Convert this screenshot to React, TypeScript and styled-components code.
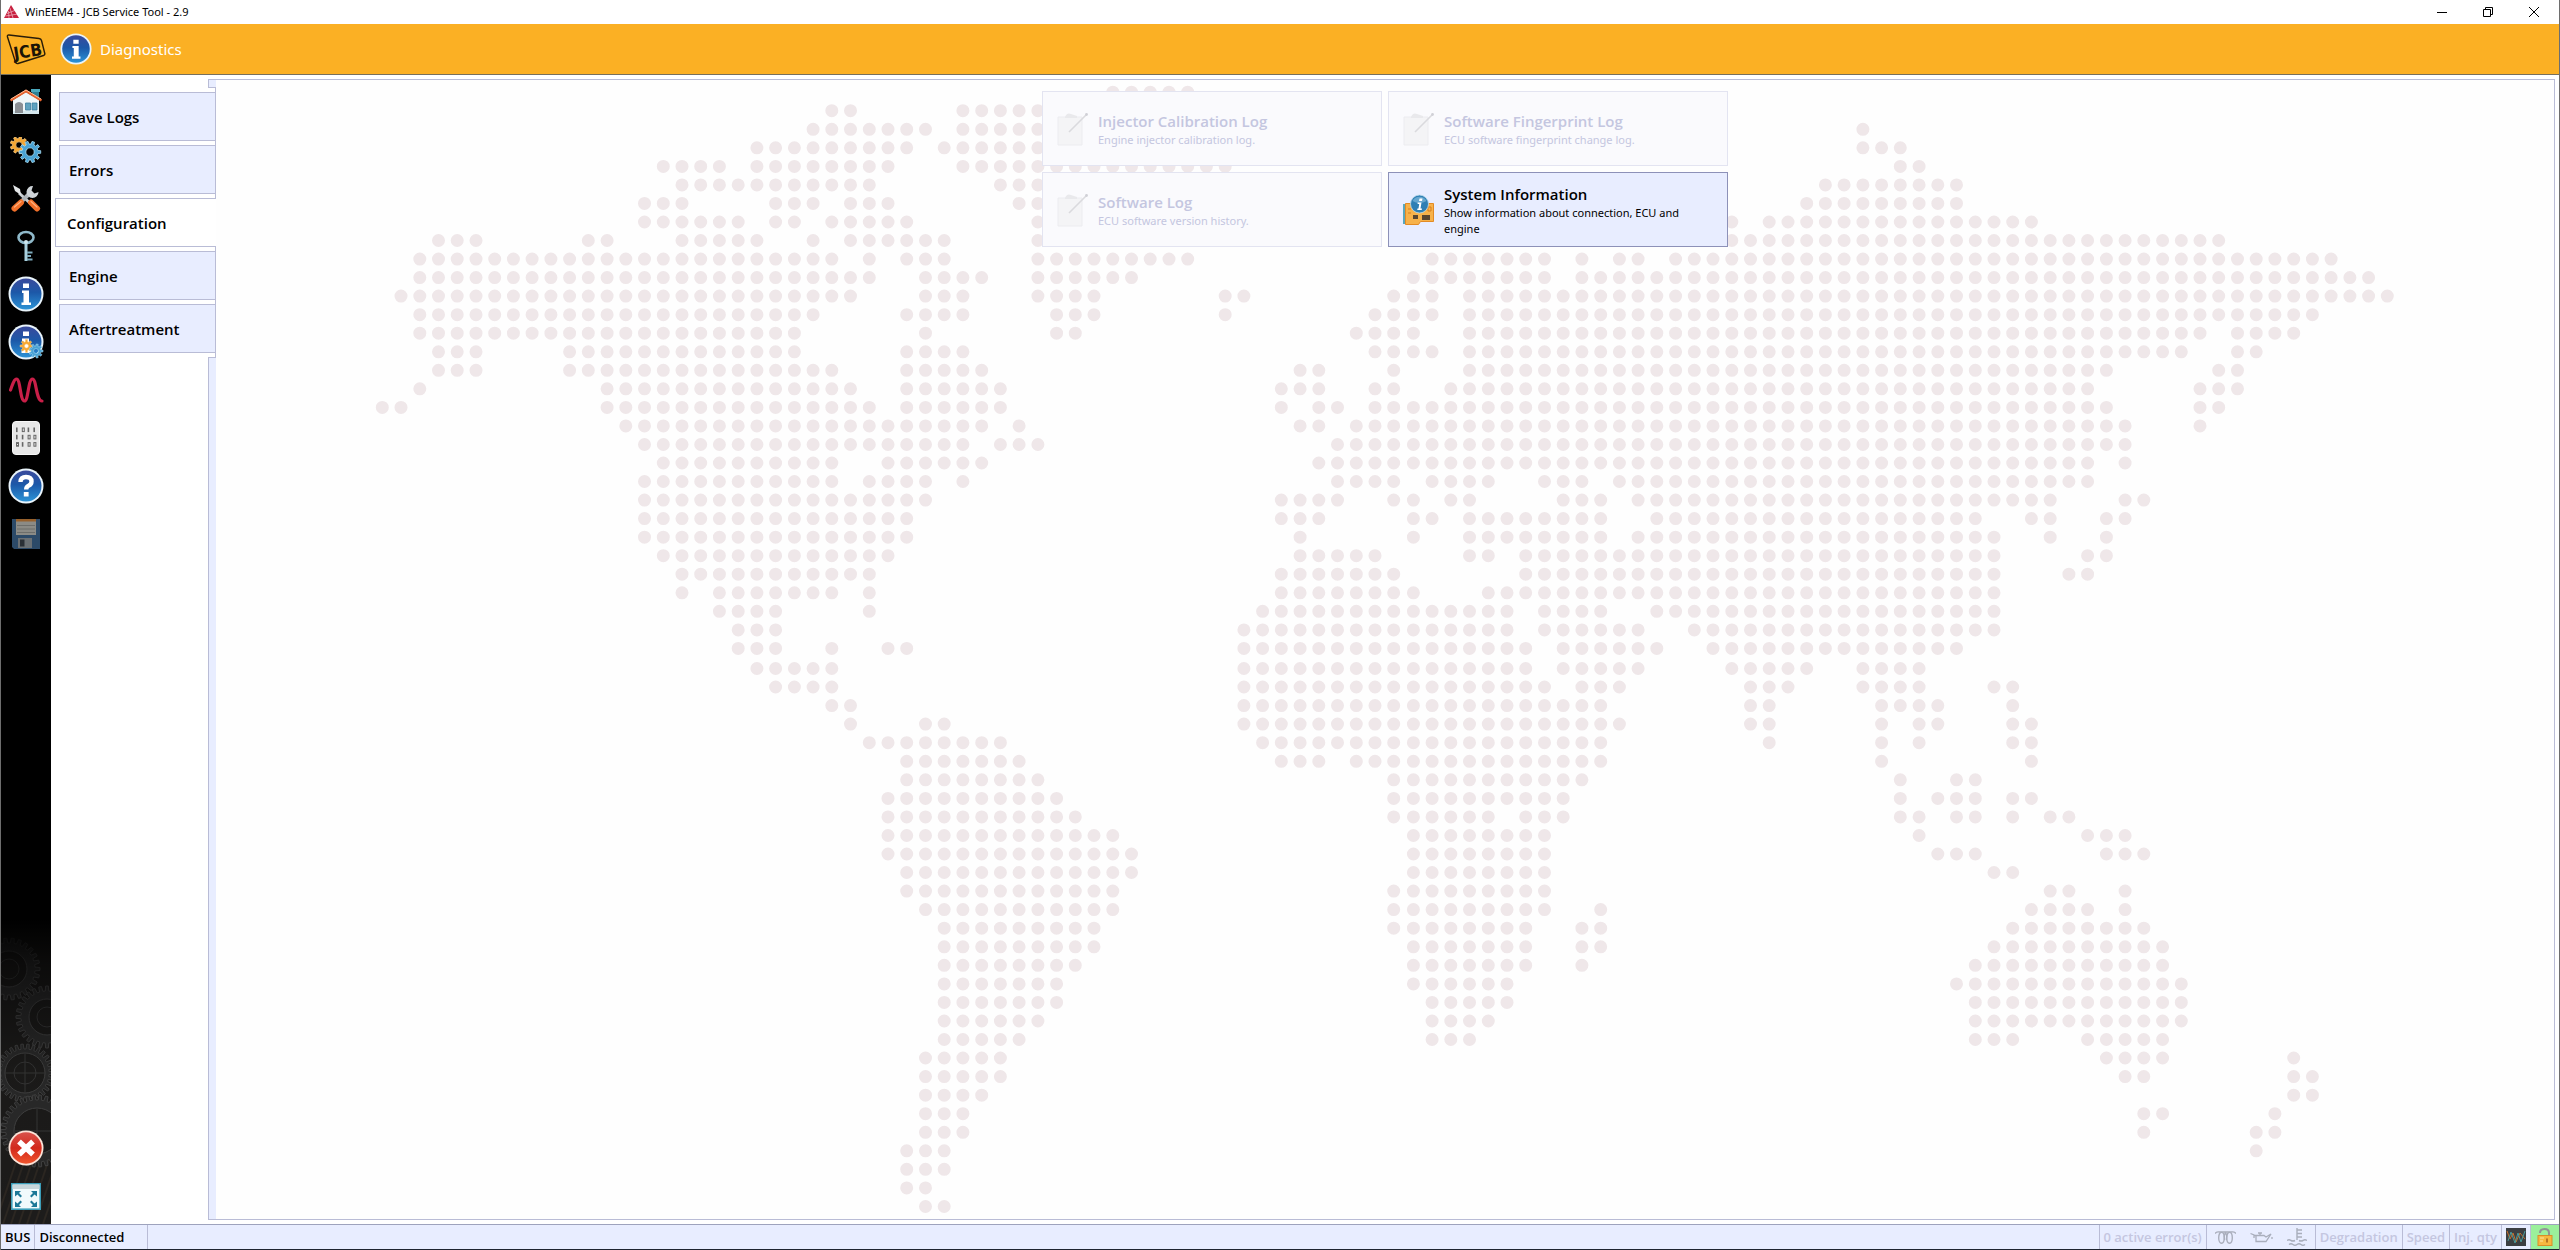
import React from "react";
import styled, { createGlobalStyle, css } from "styled-components";

const color = {
  orange: "#fbb024",
  lavender: "#e8edff",
  line: "#b9bcd6",
  edge: "#6e6e6e",
  muted: "#c4c6e0",
  dot: "#efe7e9",
};

const regularFont = `"Noto Sans", "Open Sans", sans-serif`;

const GlobalStyle = createGlobalStyle`
  *, *::before, *::after { box-sizing: border-box; }
  html, body { margin: 0; padding: 0; }
  body {
    font-family: "Open Sans", "Noto Sans", sans-serif;
    font-size: 14px;
    color: #000;
    background: #fff;
  }
  button { font: inherit; color: inherit; margin: 0; padding: 0; border: 0; background: none; }
`;

const Window = styled.div`
  display: flex;
  flex-direction: column;
  height: 100vh;
  overflow: hidden;
  border-left: 1px solid ${color.edge};
  border-right: 1px solid ${color.edge};
`;

const TitleBar = styled.header`
  display: flex;
  align-items: center;
  height: 24px;
  padding-left: 3px;
  padding-right: 2px;
  gap: 6px;
  flex: none;
`;

const WindowTitle = styled.span`
  flex: 1;
  font-family: ${regularFont};
  font-size: 11px;
  line-height: 16px;
`;

const WindowControls = styled.div`
  display: flex;
`;

const WindowButton = styled.button`
  display: flex;
  align-items: center;
  justify-content: center;
  width: 46px;
  height: 24px;
`;

const Banner = styled.div`
  display: flex;
  align-items: center;
  height: 51px;
  flex: none;
  padding-left: 5px;
  background: ${color.orange};
  border-bottom: 1px solid #77705c;
  color: #fff;
`;

const BannerIcon = styled.span`
  display: flex;
  margin-left: 14px;
  margin-right: 8px;
`;

const PageTitle = styled.h1`
  margin: 0;
  font-family: ${regularFont};
  font-size: 15px;
  line-height: 20px;
  font-weight: 400;
`;

const Body = styled.div`
  display: flex;
  flex: 1;
  min-height: 0;
`;

const Sidebar = styled.nav`
  display: grid;
  width: 50px;
  flex: none;
  background: #000;
`;

const SidebarArt = styled.div`
  grid-area: 1 / 1;
  align-self: end;
  height: 305px;
  overflow: hidden;
`;

const SidebarItems = styled.div`
  grid-area: 1 / 1;
  display: flex;
  flex-direction: column;
  padding: 3px 0 4px;
`;

const Spacer = styled.div`
  flex: 1;
`;

const SideButton = styled.button`
  display: flex;
  align-items: center;
  justify-content: center;
  height: 48px;
`;

const Workspace = styled.main`
  display: flex;
  flex: 1;
  min-width: 0;
  padding: 4px;
`;

const TabRail = styled.div`
  display: flex;
  flex-direction: column;
  width: 161px;
  flex: none;
`;

const RailCap = styled.div<{ $fill?: boolean }>`
  align-self: flex-end;
  width: 8px;
  background: ${color.lavender};
  border: 1px solid ${color.line};
  border-right: 0;
  ${(p) => (p.$fill ? css`flex: 1;` : css`height: 9px;`)}
`;

const TabList = styled.div`
  display: flex;
  flex-direction: column;
  gap: 4px;
  padding: 4px 0;
  border-right: 1px solid ${color.line};
`;

const Tab = styled.button<{ $active?: boolean }>`
  height: 49px;
  margin-left: 4px;
  padding-left: 9px;
  text-align: left;
  font-size: 15px;
  line-height: 20px;
  font-weight: 600;
  background: ${color.lavender};
  border: 1px solid ${color.line};
  border-right: 0;
  ${(p) =>
    p.$active &&
    css`
      margin-left: 0;
      margin-right: -1px;
      padding-left: 11px;
      background: #fff;
    `}
`;

const Panel = styled.section`
  display: grid;
  flex: 1;
  min-width: 0;
  grid-template: minmax(0, 1fr) / minmax(0, 1fr);
  background: #fefefe;
  border: 1px solid ${color.line};
  border-left: 0;
`;

const MapLayer = styled.div`
  grid-area: 1 / 1;
  min-height: 0;
  svg { display: block; width: 100%; height: 100%; }
`;

const CardGrid = styled.div`
  grid-area: 1 / 1;
  display: grid;
  grid-template-columns: repeat(2, 340px);
  grid-auto-rows: 75px;
  gap: 6px;
  justify-content: center;
  align-content: start;
  padding-top: 11px;
`;

const Card = styled.button`
  display: flex;
  align-items: center;
  gap: 9px;
  padding-left: 14px;
  padding-right: 12px;
  text-align: left;
  color: #000;
  background: ${color.lavender};
  border: 1px solid #8d91b8;
  svg { flex: none; }
  &:disabled {
    color: ${color.muted};
    background: #fafafd;
    border-color: #e3e4f1;
  }
`;

const CardText = styled.span`
  display: flex;
  flex-direction: column;
`;

const CardTitle = styled.span`
  font-size: 15px;
  line-height: 22px;
  font-weight: 600;
`;

const CardNote = styled.span`
  font-family: ${regularFont};
  font-size: 11px;
  line-height: 16px;
`;

const StatusBar = styled.footer`
  display: flex;
  align-items: stretch;
  height: 26px;
  flex: none;
  background: ${color.lavender};
  border-top: 1px solid #9ea3bd;
  border-bottom: 1px solid #1d2430;
`;

const StatusCell = styled.span<{ $muted?: boolean; $grow?: boolean }>`
  display: flex;
  align-items: center;
  padding: 0 4px;
  font-size: 13px;
  line-height: 20px;
  font-weight: 600;
  border-right: 1px solid ${color.line};
  ${(p) => p.$muted && css`color: ${color.muted};`}
  ${(p) => p.$grow && css`flex: 1;`}
`;

const StatusWide = styled(StatusCell)`
  width: 113px;
`;

const StatusLamps = styled(StatusCell)`
  gap: 14px;
  padding: 0 8px;
`;

const LockCell = styled.span`
  display: flex;
  align-items: center;
  justify-content: center;
  width: 28px;
  background: #9bf09b;
`;

/* Dotted world map: one string per grid row, listing the filled column ranges. */
const MAP_ROWS = [
  "39-43",
  "24-25 31-43",
  "23-29 31-45 79",
  "20-28 30-45 79-81",
  "15-18 20-27 31-45 81-82",
  "16-26 33-45 77-84",
  "14-16 21-23 25-27 34-45 76-84",
  "14-19 21-22 24-28 35-45 72 74-88",
  "3-5 11-12 16-20 23 25-30 35-44 72-98",
  "2-24 26 28-30 35-43 56-62 64 66-67 69-104",
  "2-26 29-32 35-40 55-62 64-106",
  "1-25 29-31 35-38 45-46 54-56 58-107",
  "2-23 28-31 36-38 45 53-56 58-103",
  "2-22 29 36-37 52-55 58-97 99-102",
  "3-5 10-22 28-31 53-56 58-96 99-100",
  "3-5 10-24 28-32 49-50 54 58-92 98-99",
  "2 12-25 28-33 48-50 53-54 57-91 97-99",
  "0-1 12-26 28-33 48 50-51 53-92 97-98",
  "13-32 34 49-50 52-93 97",
  "14-31 33-35 51-93",
  "15-24 27-32 50-91 93",
  "14-24 26-29 31 51-54 56-59 62-64 66-91",
  "14-29 48-51 54-55 57-58 63-65 67-89 93-94",
  "14-28 48-50 55-56 58-65 68-85 88-89 92-93",
  "14-28 49 55 58-65 67-86 89 92",
  "15-27 49-53 58-59 61-86 91-92",
  "16-26 48-54 61-86 90-91",
  "16 18-24 26 48-55 59-86",
  "18-21 26 47-60 62-65 68-86",
  "19-21 46-60 62-67 70-86",
  "19-21 24 27-28 46-61 63-68 71-84",
  "20-24 46-61 63-67 72-76 79-82",
  "21-24 46-62 64-66 73-75 79-82 86-87",
  "24-25 46-65 73-74 80-83 87",
  "25 29-30 46-66 73-74 80 82-83 87-88",
  "26-33 47-65 74 80 82 87-88",
  "28-34 48-50 52-65 80 88",
  "28-35 54-64 81 84-85",
  "27-36 54-63 81 83-85 87-88",
  "27-37 54-59 61-63 81-82 84-85 87 89-90",
  "27-39 55-62 82 91-93",
  "27-40 55-62 83-85 92-94",
  "28-40 55-62 86-87",
  "28-39 54-62 89-90 93",
  "29-39 54-62 65 88-91 93",
  "30-38 54-61 64-65 87-94",
  "30-38 55-61 64-65 86-95",
  "30-37 55-61 64 85-95",
  "30-36 55-60 84-96",
  "30-36 56-60 85-96",
  "30-35 56-59 85-96",
  "30-34 56-58 85-87 91-95",
  "29-33 92-95 102",
  "29-33 93-94 102-103",
  "29-32 102-103",
  "29-31 94-95 101",
  "29-31 94 100-101",
  "28-30 100",
  "28-30",
  "28-29",
  "29-30",
];

function mapPath(): string {
  const r = 6.5;
  let d = "";
  MAP_ROWS.forEach((row, j) => {
    const y = (j <= 30 ? 12.2 + 18.54 * j : 588.5 + 18.55 * (j - 31)).toFixed(1);
    row.split(" ").forEach((range) => {
      const [a, b = a] = range.split("-").map(Number);
      for (let i = a; i <= b; i++) {
        const x = 166.3 + 18.73 * i + (i > 54 ? 0.9 : 0) - r;
        d += `M${x.toFixed(1)} ${y}a${r} ${r} 0 1 0 13 0a${r} ${r} 0 1 0 -13 0`;
      }
    });
  });
  return d;
}

const WORLD = mapPath();

function gearPath(cx: number, cy: number, inner: number, outer: number, teeth: number, hole = 0): string {
  const pts: string[] = [];
  const step = (Math.PI * 2) / teeth;
  for (let i = 0; i < teeth; i++) {
    const a = i * step;
    [[-0.3, inner], [-0.2, outer], [0.2, outer], [0.3, inner]].forEach(([f, rad]) => {
      pts.push(`${(cx + Math.cos(a + f * step) * rad).toFixed(2)} ${(cy + Math.sin(a + f * step) * rad).toFixed(2)}`);
    });
  }
  let d = `M${pts.join("L")}Z`;
  if (hole) d += `M${cx - hole} ${cy}a${hole} ${hole} 0 1 0 ${hole * 2} 0a${hole} ${hole} 0 1 0 ${-hole * 2} 0Z`;
  return d;
}

const AppMark = () => (
  <svg width="15" height="14" viewBox="0 0 15 14" aria-hidden="true">
    <path d="M7 0L15 13H0Z" fill="#c8203f" />
    <path d="M3 8.5L12 5M1.500 11L14 9M6 3L9 13M4.500 6L5 13" stroke="#fff" strokeWidth="0.7" opacity="0.7" />
  </svg>
);

const JcbLogo = () => (
  <svg width="40" height="31" viewBox="0 0 40 31" role="img" aria-label="JCB">
    <path d="M3 1L33 4.500Q35 4.700 35.500 6.500L38.800 19.500Q39.200 21 37.500 21.500L12 29.500Q10 30 9.500 28L1.500 3Q1 0.800 3 1Z" fill="none" stroke="#2a1d08" strokeWidth="1.400" strokeLinejoin="round" />
    <text x="8.500" y="25.500" transform="rotate(-9 8.5 25.5)" fontFamily="DejaVu Sans Condensed, DejaVu Sans, sans-serif" fontSize="17" fontWeight="700" fill="#1d1507">JCB</text>
  </svg>
);

const BlueDisc = ({ size, id, children }: { size: number; id: string; children?: React.ReactNode }) => (
  <svg width={size} height={size} viewBox="0 0 36 36" aria-hidden="true">
    <defs>
      <linearGradient id={id} x1="0" y1="0" x2="0" y2="1">
        <stop offset="0" stopColor="#3a4a9c" />
        <stop offset="0.450" stopColor="#1c58a8" />
        <stop offset="1" stopColor="#2c93d6" />
      </linearGradient>
    </defs>
    <circle cx="18" cy="18" r="17.500" fill="#e9f4fb" />
    <circle cx="18" cy="18" r="15.500" fill={`url(#${id})`} />
    {children}
  </svg>
);

const InfoGlyph = () => (
  <path d="M15 7.500h6v4.500h-6zM14 14.500h7v12h2v2.500h-9.500v-2.500h2v-9.500h-1.500z" fill="#fff" />
);

const HomeIcon = () => (
  <svg width="34" height="28" viewBox="0 0 34 28" aria-hidden="true">
    <path d="M23 2h7v9h-7z" fill="#2d7f93" />
    <path d="M22 1h9v3h-9z" fill="#4aa9bd" />
    <path d="M4 12L17 4L30 12V26H4Z" fill="#eef6f8" />
    <path d="M4 23h26v3h-26z" fill="#d5e8ee" />
    <path d="M1.500 12.500L17 3L32.500 12.500" fill="none" stroke="#e8622c" strokeWidth="2.600" />
    <path d="M2 11L17 2L32 11" fill="none" stroke="#ffc9a4" strokeWidth="0.900" />
    <path d="M6 25V16q4-4 8 0V25z" fill="#8a8f94" />
    <path d="M16.500 15h5v7h-5zM23 15h5v7h-5z" fill="#5fa3c0" stroke="#3b7f9e" strokeWidth="0.800" />
  </svg>
);

const GearsIcon = () => (
  <svg width="32" height="26" viewBox="0 0 32 26" aria-hidden="true">
    <path d={gearPath(9, 8, 6.5, 8.800, 9, 3.2)} fill="#f5a733" stroke="#fbd08a" strokeWidth="0.700" fillRule="evenodd" />
    <path d={gearPath(20, 15, 8, 10.800, 10, 4.2)} fill="#4aa3d4" stroke="#a5daf2" strokeWidth="0.800" fillRule="evenodd" />
  </svg>
);

const ToolsIcon = () => (
  <svg width="30" height="28" viewBox="0 0 30 28" aria-hidden="true">
    <path d="M8 9L20 20" stroke="#c9ced2" strokeWidth="3" />
    <path d="M2 1L9 5L10 11L4 7Z" fill="#e3e6e8" />
    <path d="M10 18L19 9" stroke="#aeb4b9" strokeWidth="4" />
    <path d="M22 2a6 6 0 1 0 5.500 6l-4 1.500l-3-3z" fill="#cfd4d8" />
    <path d="M3.500 24.500L10 18.500" stroke="#f2702a" strokeWidth="6" strokeLinecap="round" />
    <path d="M20 18.500L26 24.500" stroke="#f2702a" strokeWidth="6" strokeLinecap="round" />
    <path d="M3.500 23L10 17.500M20 17.500L26 23" stroke="#ffb07c" strokeWidth="1.200" strokeLinecap="round" />
  </svg>
);

const KeyIcon = () => (
  <svg width="20" height="32" viewBox="0 0 20 32" aria-hidden="true">
    <ellipse cx="10" cy="7.500" rx="7.500" ry="5.500" fill="none" stroke="#8fb9ca" strokeWidth="2.600" />
    <path d="M10 13V31" stroke="#a9d0de" strokeWidth="3" />
    <path d="M11 22.500h5.500M11 26h4M11 29.500h5.500" stroke="#7eabbd" strokeWidth="2" />
    <circle cx="10" cy="12" r="2" fill="#cfe8f0" />
  </svg>
);

const WaveIcon = () => (
  <svg width="36" height="28" viewBox="0 0 36 28" aria-hidden="true">
    <path d="M2.500 14C5 7 6.500 3 8.500 3C12.500 3 12 25 16.500 25C20.500 25 20 3 24.500 3C28.500 3 28 25 34 25" fill="none" stroke="#c91f48" strokeWidth="3.200" strokeLinecap="round" />
  </svg>
);

const BITS = ["1011", "1100", "0100"];
const BinaryIcon = () => (
  <svg width="28" height="34" viewBox="0 0 28 34" aria-hidden="true">
    <rect x="0.500" y="0.500" width="27" height="33" rx="3.500" fill="#e8e8e8" stroke="#f7f7f7" />
    {BITS.map((row, j) =>
      row.split("").map((bit, i) => (
        <rect key={`${j}${i}`} x={4.5 + i * 5.8} y={7 + j * 7.3} width={bit === "1" ? 0.6 : 2} height="3.600" fill="none" stroke="#666" strokeWidth="1" />
      ))
    )}
  </svg>
);

const DiskIcon = () => (
  <svg width="28" height="30" viewBox="0 0 28 30" aria-hidden="true">
    <path d="M0 0h28v30h-26l-2-2z" fill="#2c4a68" />
    <path d="M4 1h20v15h-20z" fill="#8b8b86" />
    <path d="M4 0h20v2.500h-20z" fill="#96602c" />
    <path d="M5 6.500h18M5 10h18M5 13.500h18" stroke="#6d6e6b" />
    <path d="M6 19h14v10h-14z" fill="#6a7074" />
    <path d="M8 20.500h4.500v7h-4.500z" fill="#2a3036" />
  </svg>
);

const CloseIcon = () => (
  <svg width="36" height="36" viewBox="0 0 36 36" aria-hidden="true">
    <defs>
      <linearGradient id="close-disc" x1="0" y1="0" x2="0" y2="1">
        <stop offset="0" stopColor="#d8514a" />
        <stop offset="0.500" stopColor="#d2291c" />
        <stop offset="1" stopColor="#f0542c" />
      </linearGradient>
    </defs>
    <circle cx="18" cy="18" r="17.500" fill="#fbe3d8" />
    <circle cx="18" cy="18" r="15.700" fill="url(#close-disc)" />
    <path d="M11 11.500L25 24.500M25 11.500L11 24.500" stroke="#fff" strokeWidth="5.500" />
  </svg>
);

const FullScreenIcon = () => (
  <svg width="30" height="27" viewBox="0 0 30 27" aria-hidden="true">
    <rect x="0.800" y="0.800" width="28.400" height="25.400" fill="#f1fafc" stroke="#3b9db8" strokeWidth="1.600" />
    <path d="M1.500 1.500h27v4.500h-27z" fill="#c7d6da" />
    <path d="M4 8h6l-2 2l3 3l-1.500 1.500l-3-3l-2.500 2zM26 8h-6l2 2l-3 3l1.500 1.500l3-3l2.500 2zM4 24h6l-2-2l3-3l-1.500-1.500l-3 3l-2.500-2zM26 24h-6l2-2l-3-3l1.500-1.500l3 3l2.500-2z" fill="#1c7897" />
  </svg>
);

const GearArt = () => (
  <svg width="50" height="305" viewBox="0 0 50 305" aria-hidden="true">
    <defs>
      <linearGradient id="art-fade" x1="0" y1="0" x2="0" y2="1">
        <stop offset="0" stopColor="#000" />
        <stop offset="0.150" stopColor="#000" stopOpacity="0.600" />
        <stop offset="0.500" stopColor="#000" stopOpacity="0.100" />
        <stop offset="1" stopColor="#000" stopOpacity="0" />
      </linearGradient>
    </defs>
    <rect width="50" height="305" fill="#1d1c1b" />
    <g stroke="#2c2722" strokeWidth="2">
      {[0, 1, 2, 3, 4, 5, 6, 7].map((i) => (
        <path key={i} d={`M${i * 8 - 6} 305L${i * 8 + 16} 240`} />
      ))}
    </g>
    <g fill="#2b2b2b" stroke="#434343" strokeWidth="1" fillRule="evenodd">
      <path d={gearPath(8, 50, 26, 31, 26, 18)} />
      <path d={gearPath(46, 98, 26, 31, 28, 18)} />
      <path d={gearPath(24, 154, 24, 29, 30, 20)} />
      <path d={gearPath(36, 212, 31, 36, 34, 23)} />
    </g>
    <g fill="none" stroke="#383838">
      <circle cx="8" cy="50" r="10" />
      <circle cx="46" cy="98" r="10" />
      <circle cx="24" cy="154" r="11" />
      <path d="M24 134v40M4 154h40M36 190v44M14 212h36" />
    </g>
    <rect width="50" height="305" fill="url(#art-fade)" />
  </svg>
);

const NoteIcon = () => (
  <svg width="32" height="35" viewBox="0 0 32 35" aria-hidden="true">
    <path d="M1 6h24v28h-24z" fill="#f4f4f6" stroke="#ececf0" />
    <path d="M8 6q2-5 6-3l6 2v2h-12z" fill="#e9e9ec" />
    <path d="M12 21L29 4" stroke="#dadade" strokeWidth="1.600" />
    <circle cx="29.500" cy="3.500" r="1.400" fill="#d0d0d6" />
  </svg>
);

const SystemIcon = () => (
  <svg width="32" height="32" viewBox="0 0 32 32" aria-hidden="true">
    <path d="M0 10h3v20h-3z" fill="#5aa7bd" />
    <path d="M2.500 9.500h28v18h-13l-2 3h-13z" fill="#f7b24a" stroke="#e38b24" />
    <path d="M10 21h5v4h-5zM19 21h8v5h-8z" fill="#5a4630" />
    <path d="M5 15h3M5 19h3M25 13h3v4h-3z" stroke="#d77f1e" fill="none" />
    <circle cx="16.500" cy="10" r="9" fill="#2e7fb4" stroke="#bcdcec" strokeWidth="0.800" />
    <path d="M9.500 7a8 8 0 0 1 14 0q-7 4-14 0z" fill="#7fb8da" opacity="0.700" />
    <path d="M16.500 4.500h3l-0.500 2.500h-3zM14.500 8.500h4l-1 6h1.500l-0.300 1.500h-4.500l0.300-1.500h1l0.700-4.500h-1.500z" fill="#fff" />
  </svg>
);

const CoilIcon = () => (
  <svg width="21" height="13" viewBox="0 0 21 13" fill="none" stroke="#a9aebc" strokeWidth="1.400" aria-hidden="true">
    <path d="M0 2.500q2-2 4.500-1.500h12q2.500-0.500 4.500 1.500" />
    <ellipse cx="6.500" cy="6.800" rx="2.800" ry="5.400" />
    <ellipse cx="14.500" cy="6.800" rx="2.800" ry="5.400" />
    <path d="M10.500 1q-2 4-1 8M10.500 1q2 4 1 8" />
  </svg>
);

const OilIcon = () => (
  <svg width="23" height="11" viewBox="0 0 23 11" fill="none" stroke="#a9aebc" strokeWidth="1.300" aria-hidden="true">
    <path d="M0.500 1.500L4 3v3M4 3.500h4M8 1h4M10 1v2.500M6 3.500h8l2 1.500l5-3l-5 7.500h-10z" />
    <path d="M22 5v2" />
  </svg>
);

const CoolantIcon = () => (
  <svg width="20" height="18" viewBox="0 0 20 18" fill="none" stroke="#a9aebc" strokeWidth="1.400" aria-hidden="true">
    <path d="M10 0v12M10 2h5M10 5.500h5M10 9h5" />
    <path d="M0 12.500q2-1.500 4 0q2 1 4 0M12 12.500q2 1 4 0q2-1.500 4 0M2 16.500q2-1.500 4 0t4 0t4 0t4 0" />
  </svg>
);

const ChartIcon = () => (
  <svg width="20" height="18" viewBox="0 0 20 18" aria-hidden="true">
    <rect width="20" height="18" fill="#3c3f42" />
    <path d="M1 3l3 8l3-6l3 9l4-9l5 6" fill="none" stroke="#c8702c" />
    <path d="M2 13l3-9l4 11l3-10l3 9l4-11" fill="none" stroke="#4a9a9a" />
  </svg>
);

const LockIcon = () => (
  <svg width="16" height="18" viewBox="0 0 16 18" aria-hidden="true">
    <path d="M3 5q0-4 4.500-4t4.500 4v3" fill="none" stroke="#8f9496" strokeWidth="2" />
    <rect x="1" y="7.500" width="14" height="10" fill="#f6b840" stroke="#d98e26" />
    <path d="M3 10h4M3 13h3" stroke="#fde3a0" />
    <path d="M10 10.500v4" stroke="#a05f18" strokeWidth="1.500" />
  </svg>
);

const SIDE_ITEMS: { label: string; icon: React.ReactNode }[] = [
  { label: "Home", icon: <HomeIcon /> },
  { label: "Settings", icon: <GearsIcon /> },
  { label: "Service", icon: <ToolsIcon /> },
  { label: "Key", icon: <KeyIcon /> },
  { label: "Diagnostics", icon: <BlueDisc size={36} id="disc-a"><InfoGlyph /></BlueDisc> },
  {
    label: "System setup",
    icon: (
      <BlueDisc size={36} id="disc-b">
        <InfoGlyph />
        <path d={gearPath(18.5, 22, 4.500, 6.500, 8, 2)} fill="#f5a733" stroke="#fbd08a" strokeWidth="0.500" fillRule="evenodd" />
        <path d={gearPath(28, 27, 5, 7, 9, 2.5)} fill="#4aa3d4" stroke="#a5daf2" strokeWidth="0.600" fillRule="evenodd" />
      </BlueDisc>
    ),
  },
  { label: "Measure", icon: <WaveIcon /> },
  { label: "Data", icon: <BinaryIcon /> },
  {
    label: "Help",
    icon: (
      <BlueDisc size={36} id="disc-c">
        <path d="M12.500 14q0-5 5.500-5t5.500 4.500q0 3-3 4.300q-2.300 1-2.300 3.700" fill="none" stroke="#fff" strokeWidth="4.400" />
        <rect x="15.800" y="24" width="4.800" height="4.500" fill="#fff" />
      </BlueDisc>
    ),
  },
  { label: "Save", icon: <DiskIcon /> },
];

const TABS = ["Save Logs", "Errors", "Configuration", "Engine", "Aftertreatment"];

const CARDS = [
  { title: "Injector Calibration Log", note: "Engine injector calibration log.", enabled: false },
  { title: "Software Fingerprint Log", note: "ECU software fingerprint change log.", enabled: false },
  { title: "Software Log", note: "ECU software version history.", enabled: false },
  { title: "System Information", note: "Show information about connection, ECU and engine", enabled: true },
];

export default function App() {
  const [active, setActive] = React.useState("Configuration");
  return (
    <>
      <GlobalStyle />
      <Window>
        <TitleBar>
          <AppMark />
          <WindowTitle>WinEEM4 - JCB Service Tool - 2.9</WindowTitle>
          <WindowControls>
            <WindowButton aria-label="Minimize">
              <svg width="10" height="10" viewBox="0 0 10 10"><path d="M0 5.500h10" stroke="#000" /></svg>
            </WindowButton>
            <WindowButton aria-label="Restore">
              <svg width="10" height="10" viewBox="0 0 10 10" fill="none" stroke="#000"><path d="M0.500 2.500h7v7h-7zM2.500 2.500v-2h7v7h-2" /></svg>
            </WindowButton>
            <WindowButton aria-label="Close">
              <svg width="10" height="10" viewBox="0 0 10 10"><path d="M0 0L10 10M10 0L0 10" stroke="#000" /></svg>
            </WindowButton>
          </WindowControls>
        </TitleBar>
        <Banner>
          <JcbLogo />
          <BannerIcon>
            <BlueDisc size={32} id="disc-head"><InfoGlyph /></BlueDisc>
          </BannerIcon>
          <PageTitle>Diagnostics</PageTitle>
        </Banner>
        <Body>
          <Sidebar aria-label="Main">
            <SidebarArt><GearArt /></SidebarArt>
            <SidebarItems>
              {SIDE_ITEMS.map((item) => (
                <SideButton key={item.label} aria-label={item.label}>{item.icon}</SideButton>
              ))}
              <Spacer />
              <SideButton aria-label="Exit"><CloseIcon /></SideButton>
              <SideButton aria-label="Full screen"><FullScreenIcon /></SideButton>
            </SidebarItems>
          </Sidebar>
          <Workspace>
            <TabRail>
              <RailCap />
              <TabList role="tablist">
                {TABS.map((t) => (
                  <Tab key={t} role="tab" aria-selected={t === active} $active={t === active} onClick={() => setActive(t)}>
                    {t}
                  </Tab>
                ))}
              </TabList>
              <RailCap $fill />
            </TabRail>
            <Panel role="tabpanel">
              <MapLayer>
                <svg viewBox="0 0 2338 1139" aria-hidden="true">
                  <path d={WORLD} fill={color.dot} />
                </svg>
              </MapLayer>
              <CardGrid>
                {CARDS.map((c) => (
                  <Card key={c.title} disabled={!c.enabled}>
                    {c.enabled ? <SystemIcon /> : <NoteIcon />}
                    <CardText>
                      <CardTitle>{c.title}</CardTitle>
                      <CardNote>{c.note}</CardNote>
                    </CardText>
                  </Card>
                ))}
              </CardGrid>
            </Panel>
          </Workspace>
        </Body>
        <StatusBar>
          <StatusCell>BUS</StatusCell>
          <StatusWide>Disconnected</StatusWide>
          <StatusCell $grow />
          <StatusCell $muted>0 active error(s)</StatusCell>
          <StatusLamps><CoilIcon /><OilIcon /><CoolantIcon /></StatusLamps>
          <StatusCell $muted>Degradation</StatusCell>
          <StatusCell $muted>Speed</StatusCell>
          <StatusCell $muted>Inj. qty</StatusCell>
          <StatusCell><ChartIcon /></StatusCell>
          <LockCell><LockIcon /></LockCell>
        </StatusBar>
      </Window>
    </>
  );
}
